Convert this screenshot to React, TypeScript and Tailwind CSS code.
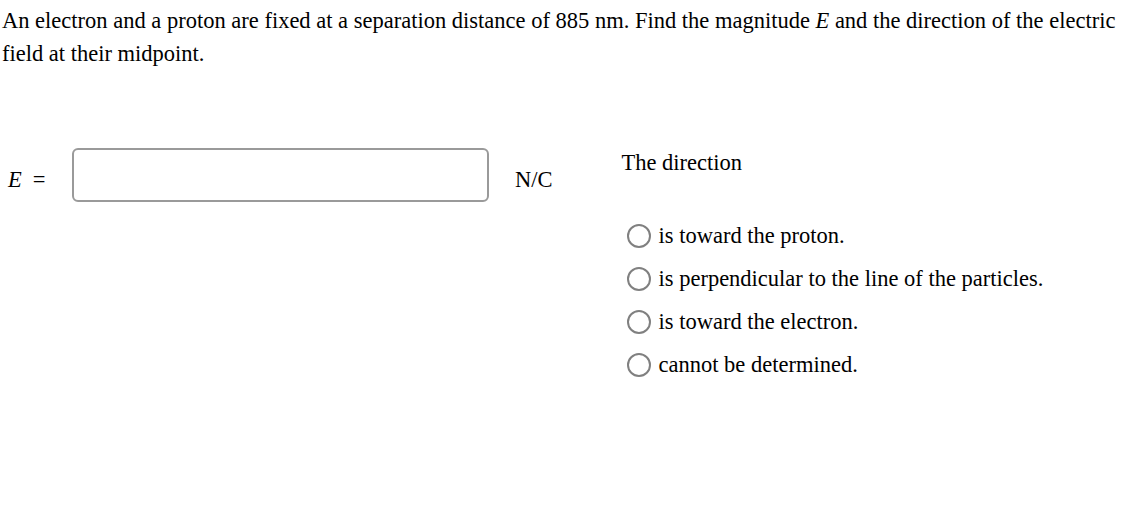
import { useState } from "react"

const OPTIONS = [
  "is toward the proton.",
  "is perpendicular to the line of the particles.",
  "is toward the electron.",
  "cannot be determined.",
]

export default function App() {
  const [value, setValue] = useState("")
  const [choice, setChoice] = useState<number | null>(null)

  return (
    <div className="min-h-[508px] w-[1128px] bg-white text-[22.5px] leading-[33px] text-black [font-family:'Liberation_Serif',serif]">
      <p className="pl-[2px] pt-[4px]">
        An electron and a proton are fixed at a separation distance of 885 nm. Find the magnitude <i>E</i> and the
        direction of the electric field at their midpoint.
      </p>

      <div className="mt-[78px] flex items-start">
        {/* Magnitude input */}
        <div className="flex items-center">
          <span className="ml-[8px] flex w-[64px] whitespace-nowrap pt-[8px]">
            <i>E</i>
            <span className="ml-[11px]">=</span>
          </span>
          <input
            value={value}
            onChange={(e) => setValue(e.target.value)}
            className="h-[54px] w-[417px] rounded-[6px] border-[2px] border-[#9a9a9a] px-3 outline-none"
          />
          <span className="ml-[26px] pt-[8px]">N/C</span>
        </div>

        {/* Direction */}
        <div className="ml-[69px]">
          <div className="mt-[2px] leading-[26px]">The direction</div>
          <div className="mt-[43px] flex flex-col gap-[10px]">
            {OPTIONS.map((opt, i) => (
              <label key={i} className="flex cursor-pointer items-center gap-[8px]">
                <span
                  onClick={() => setChoice(i)}
                  className="ml-[5px] flex h-[24px] w-[24px] items-center justify-center rounded-full border-[2px] border-[#808080] bg-white"
                >
                  {choice === i && <span className="h-[11px] w-[11px] rounded-full bg-[#333]" />}
                </span>
                <span>{opt}</span>
              </label>
            ))}
          </div>
        </div>
      </div>
    </div>
  )
}
